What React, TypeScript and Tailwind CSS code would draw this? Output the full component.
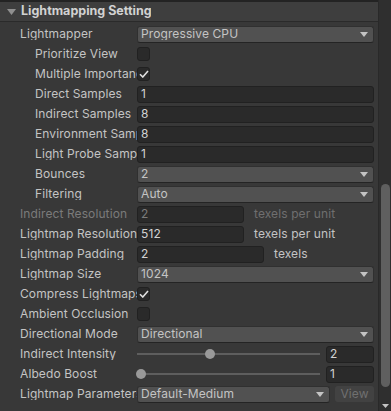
import type { ReactNode } from 'react'

const Arrow = () => (
  <svg width="8" height="5" viewBox="0 0 8 5" className="shrink-0">
    <path d="M0 0 L8 0 L4 5 Z" fill="#c4c4c4" />
  </svg>
)

function Row({ label, indent, disabled, children }: { label: string; indent?: boolean; disabled?: boolean; children: ReactNode }) {
  return (
    <div className={`flex items-center h-[20px] pr-[4px] ${indent ? 'pl-[35px]' : 'pl-[20px]'}`}>
      <div
        className={`${indent ? 'w-[102px]' : 'w-[117px]'} shrink-0 overflow-hidden whitespace-nowrap ${
          disabled ? 'text-[#7b7b7b]' : 'text-[#c4c4c4]'
        }`}
      >
        {label}
      </div>
      <div className="flex-1 flex items-center gap-[10px] min-w-0">{children}</div>
    </div>
  )
}

function Dropdown({ value, className = 'flex-1' }: { value: string; className?: string }) {
  return (
    <div
      className={`${className} h-[17px] rounded-[3px] bg-[#515151] border border-[#303030] border-b-[#242424] flex items-center justify-between pl-[3px] pr-[5px] text-[#c4c4c4]`}
    >
      <span className="whitespace-nowrap overflow-hidden">{value}</span>
      <Arrow />
    </div>
  )
}

function Field({ value, className = 'flex-1', disabled }: { value: string; className?: string; disabled?: boolean }) {
  return (
    <div
      className={`${className} h-[17px] rounded-[3px] bg-[#2a2a2a] border border-[#212121] flex items-center pl-[3px] ${
        disabled ? 'text-[#7b7b7b]' : 'text-[#d2d2d2]'
      }`}
    >
      {value}
    </div>
  )
}

function Check({ checked }: { checked?: boolean }) {
  return (
    <div className="w-[13px] h-[14px] rounded-[3px] bg-[#2a2a2a] border border-[#212121] flex items-center justify-center">
      {checked && (
        <svg width="10" height="8" viewBox="0 0 10 8">
          <path d="M1 4.2 L3.8 7 L9 1" stroke="#e0e0e0" strokeWidth="1.6" fill="none" />
        </svg>
      )}
    </div>
  )
}

function Slider({ pos, value }: { pos: number; value: string }) {
  return (
    <div className="flex-1 flex items-center gap-[6px]">
      <div className="relative w-[183px] h-[2px] bg-[#5e5e5e]">
        <div
          className="absolute top-[-4px] w-[10px] h-[10px] rounded-full bg-[#999999]"
          style={{ left: `${pos - 5}px` }}
        />
      </div>
      <Field value={value} className="w-[48px]" />
    </div>
  )
}

export default function App() {
  return (
    <div className="w-[391px] h-[411px] flex bg-[#383838] overflow-hidden font-['Inter',sans-serif] text-[12px] tracking-[0.1px] leading-none">
      <div className="w-[378px] flex flex-col">
        {/* Header */}
        <div className="h-[22px] border-t-[2px] border-[#232323] border-b border-b-[#2a2a2a] bg-[#3e3e3e] flex items-center pl-[7px]">
          <svg width="9" height="6" viewBox="0 0 9 6" className="mr-[5px]">
            <path d="M0 0 L9 0 L4.5 6 Z" fill="#8f8f8f" />
          </svg>
          <div className="w-[130px] overflow-hidden whitespace-nowrap font-bold text-[12.5px] tracking-[0px] text-[#d2d2d2]">
            Lightmapping Settings
          </div>
        </div>

        {/* Body */}
        <div className="pt-[2px] flex flex-col">
          <Row label="Lightmapper">
            <Dropdown value="Progressive CPU" />
          </Row>
          <Row label="Prioritize View" indent>
            <Check />
          </Row>
          <Row label="Multiple Importance Sampling" indent>
            <Check checked />
          </Row>
          <Row label="Direct Samples" indent>
            <Field value="1" />
          </Row>
          <Row label="Indirect Samples" indent>
            <Field value="8" />
          </Row>
          <Row label="Environment Samples" indent>
            <Field value="8" />
          </Row>
          <Row label="Light Probe Sample Multiplier" indent>
            <Field value="1" />
          </Row>
          <Row label="Bounces" indent>
            <Dropdown value="2" />
          </Row>
          <Row label="Filtering" indent>
            <Dropdown value="Auto" />
          </Row>
          <Row label="Indirect Resolution" disabled>
            <Field value="2" className="w-[107px]" disabled />
            <span className="text-[#6f6f6f] whitespace-nowrap">texels per unit</span>
          </Row>
          <Row label="Lightmap Resolution">
            <Field value="512" className="w-[107px]" />
            <span className="text-[#c4c4c4] whitespace-nowrap">texels per unit</span>
          </Row>
          <Row label="Lightmap Padding">
            <Field value="2" className="w-[127px]" />
            <span className="text-[#c4c4c4] whitespace-nowrap">texels</span>
          </Row>
          <Row label="Lightmap Size">
            <Dropdown value="1024" />
          </Row>
          <Row label="Compress Lightmaps">
            <Check checked />
          </Row>
          <Row label="Ambient Occlusion">
            <Check />
          </Row>
          <Row label="Directional Mode">
            <Dropdown value="Directional" />
          </Row>
          <Row label="Indirect Intensity">
            <Slider pos={73} value="2" />
          </Row>
          <Row label="Albedo Boost">
            <Slider pos={4} value="1" />
          </Row>
          <Row label="Lightmap Parameters">
            <div className="flex-1 flex items-center gap-[5px]">
              <Dropdown value="Default-Medium" className="w-[193px]" />
              <div className="flex-1 h-[16px] rounded-[3px] bg-[#424242] flex items-center justify-center text-[#707070]">
                View
              </div>
            </div>
          </Row>
        </div>
      </div>

      {/* Scrollbar */}
      <div className="flex-1 bg-[#2f2f2f] border-l border-[#292929] flex flex-col items-center">
        <div className="h-[184px]" />
        <div className="w-[9px] h-[203px] rounded-full bg-[#5f5f5f]" />
        <div className="flex-1 flex items-end pb-[3px]">
          <svg width="7" height="4" viewBox="0 0 7 4">
            <path d="M0 0 L7 0 L3.5 4 Z" fill="#c4c4c4" />
          </svg>
        </div>
      </div>
    </div>
  )
}
